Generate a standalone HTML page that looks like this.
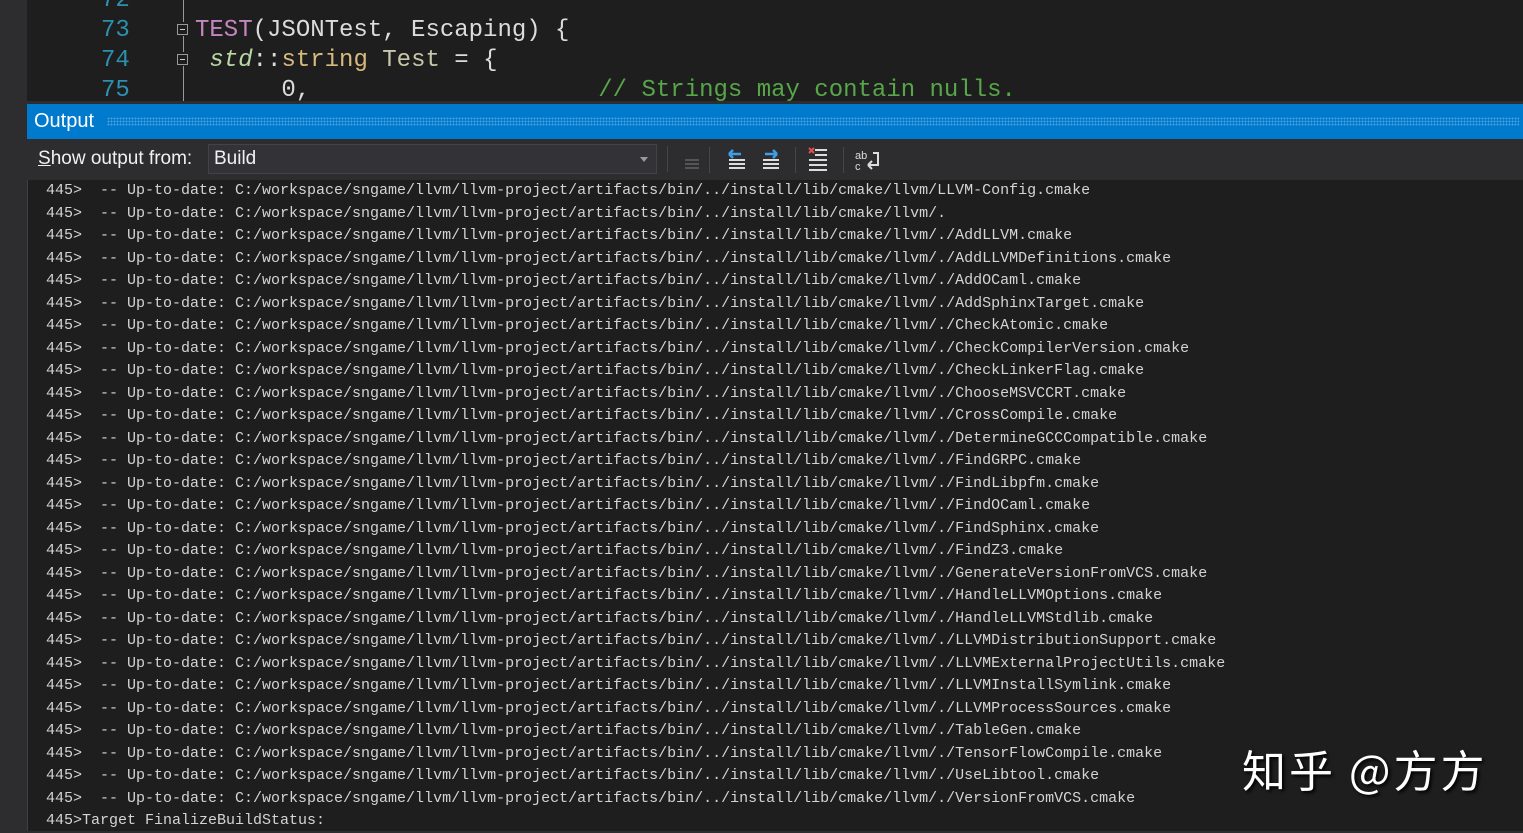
<!DOCTYPE html>
<html><head><meta charset="utf-8"><style>
body{margin:0;width:1523px;height:831px;overflow:hidden;background:#2d2d30;position:relative;font-family:"Liberation Sans",sans-serif}
.ed{position:absolute;left:27px;top:0;width:1496px;height:101px;background:#1e1e1e;overflow:hidden}
.cl{position:absolute;left:0;font:24px/30px "Liberation Mono",monospace;white-space:pre;color:#dcdcdc}
.ln{color:#2b91af;position:absolute;left:74px}
.cd{position:absolute;left:168px}
.fb{position:absolute;left:150px;width:11px;height:11px;border:1px solid #999;box-sizing:border-box}
.fb:after{content:"";position:absolute;left:2px;top:4px;width:5px;height:1px;background:#ccc}
.vl{position:absolute;left:156px;width:1px;background:#999}
.ob{position:absolute;left:27px;top:104px;width:1496px;height:35px;background:#007acc}
.ob .t{position:absolute;left:7px;top:6px;color:#fff;font-size:20px}
.ob .d{position:absolute;left:80px;right:4px;top:13px;height:9px;background-image:radial-gradient(#4aa3e0 0.8px,transparent 1px);background-size:3px 3px}
.tb{position:absolute;left:27px;top:139px;width:1496px;height:41px;background:#2d2d30}
.tb .l{position:absolute;left:11px;top:9px;color:#f1f1f1;font-size:19px}
.cb{position:absolute;left:181px;top:5px;width:449px;height:30px;background:#333337;border:1px solid #434346;box-sizing:border-box;color:#f1f1f1;font-size:19px;padding:3px 0 0 5px}
.cb:after{content:"";position:absolute;right:8px;top:12px;border:4px solid transparent;border-top:5px solid #999}
.out{position:absolute;left:27px;top:180px;width:1496px;height:651px;background:#1e1e1e;border-left:1px solid #3f3f46}
pre{position:absolute;left:18px;top:0px;margin:0;font:15px/22.5px "Liberation Mono",monospace;color:#d4d4d4}
.wm{position:absolute;left:1242px;top:736px;color:#fff;font:44px "Noto Sans CJK SC",sans-serif;text-shadow:2px 2px 3px #000;letter-spacing:3px;white-space:nowrap}
</style></head><body>
<div class="ed">
<div class="vl" style="top:0;height:22px"></div>
<div class="vl" style="top:36px;height:16px"></div>
<div class="vl" style="top:66px;height:35px"></div>
<div class="fb" style="top:24px"></div>
<div class="fb" style="top:54px"></div>
<div class="cl" style="top:-14px"><span class="ln">72</span></div>
<div class="cl" style="top:16px"><span class="ln">73</span><span class="cd"><span style="color:#c586c0">TEST</span>(JSONTest, Escaping) {</span></div>
<div class="cl" style="top:46px"><span class="ln">74</span><span class="cd"> <i style="color:#b8d7a3">std</i>::<span style="color:#d7ba7d">string</span> <span style="color:#c8c8a9">Test</span> = {</span></div>
<div class="cl" style="top:76px"><span class="ln">75</span><span class="cd">      0,                    <span style="color:#57a64a">// Strings may contain nulls.</span></span></div>
</div>
<div class="ob"><span class="t">Output</span><div class="d"></div></div>
<div class="tb"><span class="l"><u>S</u>how output from:</span><div class="cb">Build</div>
<div style="position:absolute;left:640px;top:7px;width:1px;height:26px;background:#46464a"></div>
<svg style="position:absolute;left:650px;top:6px" width="230" height="30">
<g fill="#555"><rect x="8" y="14" width="14" height="2"/><rect x="8" y="18" width="14" height="2"/><rect x="8" y="22" width="14" height="2"/></g>
<rect x="32" y="2" width="1" height="26" fill="#46464a"/>
<g fill="#ddd"><rect x="52" y="14" width="16" height="2"/><rect x="52" y="18" width="16" height="2"/><rect x="52" y="22" width="16" height="2"/>
<rect x="86" y="14" width="16" height="2"/><rect x="86" y="18" width="16" height="2"/><rect x="86" y="22" width="16" height="2"/></g>
<path d="M52 9h12M52 9l4-4M52 9l4 4" stroke="#3e9ee8" stroke-width="2.5" fill="none"/>
<path d="M100 9h-12M100 9l-4-4M100 9l-4 4" stroke="#3e9ee8" stroke-width="2.5" fill="none"/>
<rect x="118" y="2" width="1" height="26" fill="#46464a"/>
<g fill="#ddd"><rect x="138" y="4" width="12" height="2"/><rect x="138" y="9" width="12" height="2"/><rect x="132" y="14" width="18" height="2"/><rect x="132" y="19" width="18" height="2"/><rect x="132" y="24" width="18" height="2"/></g>
<path d="M132 3l5 5M137 3l-5 5" stroke="#e05050" stroke-width="2"/>
<rect x="166" y="2" width="1" height="26" fill="#46464a"/>
<text x="178" y="14" fill="#ddd" font-size="11" font-family="Liberation Sans">ab</text><text x="178" y="25" fill="#ddd" font-size="11" font-family="Liberation Sans">c</text>
<path d="M196 8h5v12h-10M191 20l4-4M191 20l4 4" stroke="#ddd" stroke-width="2" fill="none"/>
</svg>
</div>
<div class="out"><pre>445&gt;  -- Up-to-date: C:/workspace/sngame/llvm/llvm-project/artifacts/bin/../install/lib/cmake/llvm/LLVM-Config.cmake
445&gt;  -- Up-to-date: C:/workspace/sngame/llvm/llvm-project/artifacts/bin/../install/lib/cmake/llvm/.
445&gt;  -- Up-to-date: C:/workspace/sngame/llvm/llvm-project/artifacts/bin/../install/lib/cmake/llvm/./AddLLVM.cmake
445&gt;  -- Up-to-date: C:/workspace/sngame/llvm/llvm-project/artifacts/bin/../install/lib/cmake/llvm/./AddLLVMDefinitions.cmake
445&gt;  -- Up-to-date: C:/workspace/sngame/llvm/llvm-project/artifacts/bin/../install/lib/cmake/llvm/./AddOCaml.cmake
445&gt;  -- Up-to-date: C:/workspace/sngame/llvm/llvm-project/artifacts/bin/../install/lib/cmake/llvm/./AddSphinxTarget.cmake
445&gt;  -- Up-to-date: C:/workspace/sngame/llvm/llvm-project/artifacts/bin/../install/lib/cmake/llvm/./CheckAtomic.cmake
445&gt;  -- Up-to-date: C:/workspace/sngame/llvm/llvm-project/artifacts/bin/../install/lib/cmake/llvm/./CheckCompilerVersion.cmake
445&gt;  -- Up-to-date: C:/workspace/sngame/llvm/llvm-project/artifacts/bin/../install/lib/cmake/llvm/./CheckLinkerFlag.cmake
445&gt;  -- Up-to-date: C:/workspace/sngame/llvm/llvm-project/artifacts/bin/../install/lib/cmake/llvm/./ChooseMSVCCRT.cmake
445&gt;  -- Up-to-date: C:/workspace/sngame/llvm/llvm-project/artifacts/bin/../install/lib/cmake/llvm/./CrossCompile.cmake
445&gt;  -- Up-to-date: C:/workspace/sngame/llvm/llvm-project/artifacts/bin/../install/lib/cmake/llvm/./DetermineGCCCompatible.cmake
445&gt;  -- Up-to-date: C:/workspace/sngame/llvm/llvm-project/artifacts/bin/../install/lib/cmake/llvm/./FindGRPC.cmake
445&gt;  -- Up-to-date: C:/workspace/sngame/llvm/llvm-project/artifacts/bin/../install/lib/cmake/llvm/./FindLibpfm.cmake
445&gt;  -- Up-to-date: C:/workspace/sngame/llvm/llvm-project/artifacts/bin/../install/lib/cmake/llvm/./FindOCaml.cmake
445&gt;  -- Up-to-date: C:/workspace/sngame/llvm/llvm-project/artifacts/bin/../install/lib/cmake/llvm/./FindSphinx.cmake
445&gt;  -- Up-to-date: C:/workspace/sngame/llvm/llvm-project/artifacts/bin/../install/lib/cmake/llvm/./FindZ3.cmake
445&gt;  -- Up-to-date: C:/workspace/sngame/llvm/llvm-project/artifacts/bin/../install/lib/cmake/llvm/./GenerateVersionFromVCS.cmake
445&gt;  -- Up-to-date: C:/workspace/sngame/llvm/llvm-project/artifacts/bin/../install/lib/cmake/llvm/./HandleLLVMOptions.cmake
445&gt;  -- Up-to-date: C:/workspace/sngame/llvm/llvm-project/artifacts/bin/../install/lib/cmake/llvm/./HandleLLVMStdlib.cmake
445&gt;  -- Up-to-date: C:/workspace/sngame/llvm/llvm-project/artifacts/bin/../install/lib/cmake/llvm/./LLVMDistributionSupport.cmake
445&gt;  -- Up-to-date: C:/workspace/sngame/llvm/llvm-project/artifacts/bin/../install/lib/cmake/llvm/./LLVMExternalProjectUtils.cmake
445&gt;  -- Up-to-date: C:/workspace/sngame/llvm/llvm-project/artifacts/bin/../install/lib/cmake/llvm/./LLVMInstallSymlink.cmake
445&gt;  -- Up-to-date: C:/workspace/sngame/llvm/llvm-project/artifacts/bin/../install/lib/cmake/llvm/./LLVMProcessSources.cmake
445&gt;  -- Up-to-date: C:/workspace/sngame/llvm/llvm-project/artifacts/bin/../install/lib/cmake/llvm/./TableGen.cmake
445&gt;  -- Up-to-date: C:/workspace/sngame/llvm/llvm-project/artifacts/bin/../install/lib/cmake/llvm/./TensorFlowCompile.cmake
445&gt;  -- Up-to-date: C:/workspace/sngame/llvm/llvm-project/artifacts/bin/../install/lib/cmake/llvm/./UseLibtool.cmake
445&gt;  -- Up-to-date: C:/workspace/sngame/llvm/llvm-project/artifacts/bin/../install/lib/cmake/llvm/./VersionFromVCS.cmake
445&gt;Target FinalizeBuildStatus:</pre></div>
<div class="wm">知乎 @方方</div>
</body></html>
